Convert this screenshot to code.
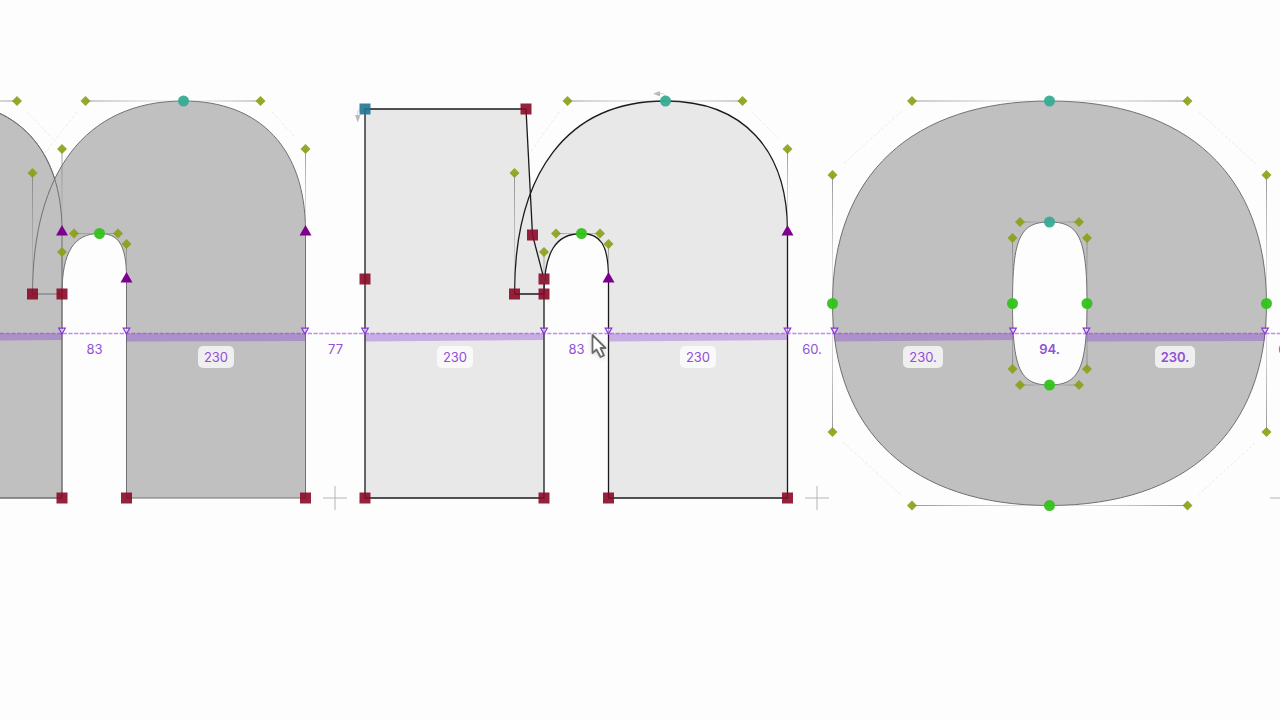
type Point = [number, number];
type NodeKind = "corner" | "start" | "curve" | "extreme" | "tangent";

const N_WIDTH = 482;

const nodeFill: Record<NodeKind, string> = {
  corner: "fill-[#8a0a27]/90",
  start: "fill-[#1f7394]/90",
  curve: "fill-[#33c21c]/95",
  extreme: "fill-[#36ac93]/95",
  tangent: "fill-[#7d008c]",
};

// arch of the n, also used for the right half of the m
const archPath =
  "M514.5 294C514.5 173 567 101 665.5 101C742.5 101 787.5 149 787.5 231V498H608.5V278C608.5 244 600 233.5 581.5 233.5C556 233.5 544 252 544 294Z";
const stemPath = "M365 109H526L532.5 235L544 279V498H365Z";
const firstArchPath = "M-120 101H-60C17 101 62 149 62 231V498H-120Z";
const oPath =
  "M832.5 303.5C832.5 175 912 101 1049.5 101C1187 101 1266.5 175 1266.5 303.5C1266.5 432 1187 505.5 1049.5 505.5C912 505.5 832.5 432 832.5 303.5Z" +
  "M1012.5 303.5C1012.5 238 1020 222 1049.5 222C1079 222 1087 238 1087 303.5C1087 369 1079 385 1049.5 385C1020 385 1012.5 369 1012.5 303.5Z";

// [off-curve point, on-curve point]
const archHandles: [Point, Point][] = [
  [[514.5, 173], [514.5, 294]],
  [[567.5, 101], [665.5, 101]],
  [[742.5, 101], [665.5, 101]],
  [[787.5, 149], [787.5, 231]],
  [[608.5, 244], [608.5, 278]],
  [[600, 233.5], [581.5, 233.5]],
  [[556, 233.5], [581.5, 233.5]],
  [[544, 252], [544, 294]],
];

const oHandles: [Point, Point][] = [
  [[832.5, 175], [832.5, 303.5]],
  [[912, 101], [1049.5, 101]],
  [[1187.5, 101], [1049.5, 101]],
  [[1266.5, 175], [1266.5, 303.5]],
  [[1266.5, 432], [1266.5, 303.5]],
  [[1187.5, 505.5], [1049.5, 505.5]],
  [[912, 505.5], [1049.5, 505.5]],
  [[832.5, 432], [832.5, 303.5]],
  [[1012.5, 238], [1012.5, 303.5]],
  [[1020, 222], [1049.5, 222]],
  [[1079, 222], [1049.5, 222]],
  [[1087, 238], [1087, 303.5]],
  [[1087, 369], [1087, 303.5]],
  [[1079, 385], [1049.5, 385]],
  [[1020, 385], [1049.5, 385]],
  [[1012.5, 369], [1012.5, 303.5]],
];

const firstArchHandles: [Point, Point][] = [
  [[17, 101], [-60, 101]],
  [[62, 149], [62, 231]],
];

const archNodes: [NodeKind, number, number][] = [
  ["corner", 514.5, 294],
  ["corner", 544, 294],
  ["extreme", 665.5, 101],
  ["tangent", 787.5, 231],
  ["tangent", 608.5, 278],
  ["curve", 581.5, 233.5],
  ["corner", 787.5, 498],
  ["corner", 608.5, 498],
];

const stemNodes: [NodeKind, number, number][] = [
  ["start", 365, 109],
  ["corner", 526, 109],
  ["corner", 532.5, 235],
  ["corner", 544, 279],
  ["corner", 544, 498],
  ["corner", 365, 498],
  ["corner", 365, 279],
];

const oNodes: [NodeKind, number, number][] = [
  ["extreme", 1049.5, 101],
  ["extreme", 1049.5, 222],
  ["curve", 832.5, 303.5],
  ["curve", 1012.5, 303.5],
  ["curve", 1087, 303.5],
  ["curve", 1266.5, 303.5],
  ["curve", 1049.5, 385],
  ["curve", 1049.5, 505.5],
];

const firstArchNodes: [NodeKind, number, number][] = [
  ["tangent", 62, 231],
  ["corner", 62, 498],
];

// [from, to, right-hand thickness]
const bands = [
  [-117, 62, 340],
  [126.5, 305, 341],
  [365, 544, 340],
  [608.5, 787.5, 340],
  [834.5, 1013, 340],
  [1086.5, 1265, 341],
];

const crossings = [62, 126.5, 305, 365, 544, 608.5, 787.5, 834.5, 1013, 1086.5, 1265];

const gaps = [
  { x: 94.5, text: "83" },
  { x: 335.5, text: "77" },
  { x: 576.5, text: "83" },
  { x: 812, text: "60." },
  { x: 1049.5, text: "94.", bold: true },
  { x: 1288, text: "60." },
];

const stems = [
  { x: 216, text: "230" },
  { x: 455, text: "230" },
  { x: 698, text: "230" },
  { x: 923, text: "230." },
  { x: 1175, text: "230.", bold: true },
];

function Handle({ id, off, on }: { id: string; off: Point; on: Point }) {
  const [x, y] = off;
  return (
    <g>
      <linearGradient id={id} gradientUnits="userSpaceOnUse" x1={x} y1={y} x2={on[0]} y2={on[1]}>
        <stop offset="0" stopColor="#777" stopOpacity="0.75" />
        <stop offset="1" stopColor="#999" stopOpacity="0.15" />
      </linearGradient>
      <path d={`M${x} ${y}L${on[0]} ${on[1]}`} stroke={`url(#${id})`} />
      <path d={`M${x} ${y - 5}l5 5l-5 5l-5 -5z`} className="fill-[#8c9f16]/90" />
    </g>
  );
}

function Node({ kind, x, y }: { kind: NodeKind; x: number; y: number }) {
  if (kind === "tangent") {
    return <path d={`M${x} ${y - 6}l6 10.5h-12z`} className={nodeFill[kind]} />;
  }
  if (kind === "curve" || kind === "extreme") {
    return <circle cx={x} cy={y} r="5.5" className={nodeFill[kind]} />;
  }
  return <rect x={x - 5.5} y={y - 5.5} width="11" height="11" className={nodeFill[kind]} />;
}

function Points({
  name,
  handles,
  nodes,
}: {
  name: string;
  handles: [Point, Point][];
  nodes: [NodeKind, number, number][];
}) {
  return (
    <g>
      {handles.map(([off, on], i) => (
        <Handle key={i} id={`${name}-${i}`} off={off} on={on} />
      ))}
      {nodes.map(([kind, x, y]) => (
        <Node key={`${x}-${y}`} kind={kind} x={x} y={y} />
      ))}
    </g>
  );
}

function Measurements() {
  return (
    <g>
      {bands.map(([from, to, bottom]) => (
        <path
          key={from}
          d={`M${from} 333.5H${to}V${bottom}L${from} 341.5Z`}
          className="fill-[#7d20db]/30"
        />
      ))}
      <path
        d="M0 333.5H1280"
        stroke="#9147dd"
        strokeOpacity="0.6"
        strokeWidth="1.5"
        strokeDasharray="4.2 1.5"
      />
      {crossings.map((x) => (
        <path
          key={x}
          d={`M${x - 3.2} 328.2h6.4l-3.2 5.8z`}
          strokeWidth="1.3"
          className="fill-white/60 stroke-[#8a35d8]"
        />
      ))}
      {gaps.map(({ x, text, bold }) => (
        <text key={x} x={x} y="354" className={bold ? "font-semibold" : ""}>
          {text}
        </text>
      ))}
      {stems.map(({ x, text, bold }) => {
        const width = text.length > 3 ? 40 : 36;
        return (
          <g key={x}>
            <rect x={x - width / 2} y="346" width={width} height="22" rx="5" className="fill-white/75" />
            <text x={x} y="362" className={bold ? "font-semibold" : ""}>
              {text}
            </text>
          </g>
        );
      })}
    </g>
  );
}

export default function App() {
  return (
    <main className="min-h-screen bg-[#fdfdfd]">
      <svg
        viewBox="0 0 1280 720"
        fill="none"
        role="img"
        aria-label="Glyph outlines"
        className="block w-full select-none"
      >
        {/* sidebearing marks on the baseline */}
        <path
          d="M323 498H347M335 486V510M805 498H829M817 486V510M1270 498H1294"
          className="stroke-[#b5b5b5]"
        />

        {/* dashed links between neighbouring handles */}
        <path
          d="M27 112L53 139M77 112L45 153M272 112L296 138M559 112L524 161M752 112L778 138M902 111L843 164M1199 112L1257 165M843 442L901 495M1255 443L1198 495"
          strokeDasharray="3 2"
          className="stroke-[#ebebeb]"
        />

        <g className="fill-[#c0c0c0] stroke-[#707070]">
          <path d={firstArchPath} />
          <path d={archPath} transform={`translate(${-N_WIDTH} 0)`} />
          <path d={firstArchPath} className="fill-none" />
          <path d={oPath} fillRule="evenodd" />
        </g>

        <g className="fill-[#e8e8e8]">
          <path d={stemPath} />
          <path d={archPath} />
        </g>
        <g strokeWidth="1.3" className="stroke-[#1a1a1a]">
          <path d={stemPath} />
          <path d={archPath} />
        </g>

        {/* path direction arrows */}
        <path d="M363 110q-6 -2 -5.5 5M665 97q0 -4 -5 -3.5" className="stroke-[#d4d4d4]" />
        <path d="M355 115h5.500l-2.700 7.500zM660 91v5.500l-7 -2.700z" className="fill-[#bdb9bd]" />

        <Points name="m" handles={firstArchHandles} nodes={firstArchNodes} />
        <g transform={`translate(${-N_WIDTH} 0)`}>
          <Points name="m-arch" handles={archHandles} nodes={archNodes} />
        </g>
        <Points name="n-stem" handles={[]} nodes={stemNodes} />
        <Points name="n-arch" handles={archHandles} nodes={archNodes} />
        <Points name="o" handles={oHandles} nodes={oNodes} />

        <g textAnchor="middle" className="font-['Inter',sans-serif] text-[13px] [&_text]:fill-[#9150d6]">
          <Measurements />
        </g>

        {/* pointer */}
        <path
          d="M592.5 335V353L596.5 349.5L600.5 357L604 355.500L600.5 348H605.5Z"
          strokeWidth="1.8"
          strokeLinejoin="round"
          className="fill-white stroke-[#6a6a6a] drop-shadow-sm"
        />
      </svg>
    </main>
  );
}
